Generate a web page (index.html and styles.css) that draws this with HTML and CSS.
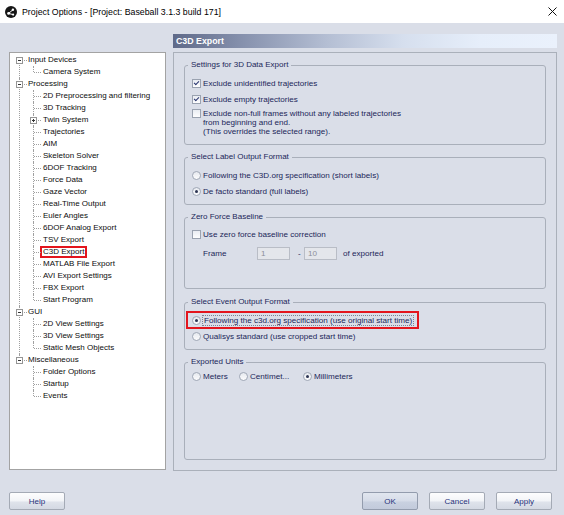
FILE: index.html
```html
<!DOCTYPE html>
<html lang="en">
<head>
<meta charset="utf-8">
<title>Project Options</title>
<link rel="stylesheet" href="styles.css">
</head>
<body>
<div class="window">
  <div class="titlebar">
    <svg class="app-icon" width="12" height="12" viewBox="0 0 12 12">
      <circle cx="6" cy="6" r="6" fill="#161616"/>
      <path d="M3.6 7.4 L7.8 3.9 M3.6 7.4 L8 8.6" stroke="#fff" stroke-width="1"/>
      <circle cx="3.6" cy="7.4" r="1.4" fill="#fff"/>
      <circle cx="7.9" cy="3.8" r="1.2" fill="#fff"/>
      <circle cx="8.1" cy="8.6" r="1.1" fill="#fff"/>
    </svg>
    <span class="title">Project Options - [Project: Baseball 3.1.3 build 171]</span>
    <svg class="close" width="9" height="9" viewBox="0 0 9 9">
      <path d="M0.5 0.5 L8.5 8.5 M8.5 0.5 L0.5 8.5" stroke="#111" stroke-width="1"/>
    </svg>
  </div>

  <div class="client">
    <div class="main">
      <div class="tree-pane">
        <ul class="tree">
          <li><span class="exp"></span><span class="label">Input Devices</span>
            <ul>
              <li><span class="label">Camera System</span></li>
            </ul>
          </li>
          <li><span class="exp"></span><span class="label">Processing</span>
            <ul>
              <li><span class="label">2D Preprocessing and filtering</span></li>
              <li><span class="label">3D Tracking</span></li>
              <li><span class="exp plus"></span><span class="label">Twin System</span></li>
              <li><span class="label">Trajectories</span></li>
              <li><span class="label">AIM</span></li>
              <li><span class="label">Skeleton Solver</span></li>
              <li><span class="label">6DOF Tracking</span></li>
              <li><span class="label">Force Data</span></li>
              <li><span class="label">Gaze Vector</span></li>
              <li><span class="label">Real-Time Output</span></li>
              <li><span class="label">Euler Angles</span></li>
              <li><span class="label">6DOF Analog Export</span></li>
              <li><span class="label">TSV Export</span></li>
              <li><span class="label"><span class="mark">C3D Export</span></span></li>
              <li><span class="label">MATLAB File Export</span></li>
              <li><span class="label">AVI Export Settings</span></li>
              <li><span class="label">FBX Export</span></li>
              <li><span class="label">Start Program</span></li>
            </ul>
          </li>
          <li><span class="exp"></span><span class="label">GUI</span>
            <ul>
              <li><span class="label">2D View Settings</span></li>
              <li><span class="label">3D View Settings</span></li>
              <li><span class="label">Static Mesh Objects</span></li>
            </ul>
          </li>
          <li><span class="exp"></span><span class="label">Miscellaneous</span>
            <ul>
              <li><span class="label">Folder Options</span></li>
              <li><span class="label">Startup</span></li>
              <li><span class="label">Events</span></li>
            </ul>
          </li>
        </ul>
      </div>

      <div class="page">
        <div class="page-header">C3D Export</div>
        <div class="page-body">
          <fieldset class="group g-data">
            <legend>Settings for 3D Data Export</legend>
            <div class="group-body">
              <div class="opt"><span class="cb on"></span><span>Exclude unidentified trajectories</span></div>
              <div class="opt"><span class="cb on"></span><span>Exclude empty trajectories</span></div>
              <div class="opt multi"><span class="cb"></span><span>Exclude non-full frames without any labeled trajectories<br>from beginning and end.<br>(This overrides the selected range).</span></div>
            </div>
          </fieldset>

          <fieldset class="group g-label">
            <legend>Select Label Output Format</legend>
            <div class="group-body">
              <div class="opt"><span class="rb"></span><span>Following the C3D.org specification (short labels)</span></div>
              <div class="opt"><span class="rb on"></span><span>De facto standard (full labels)</span></div>
            </div>
          </fieldset>

          <fieldset class="group g-force">
            <legend>Zero Force Baseline</legend>
            <div class="group-body">
              <div class="opt"><span class="cb"></span><span>Use zero force baseline correction</span></div>
              <div class="frame-row">
                <span class="frame-label">Frame</span>
                <span class="num">1</span>
                <span class="dash">-</span>
                <span class="num">10</span>
                <span class="of">of exported</span>
              </div>
            </div>
          </fieldset>

          <fieldset class="group g-event">
            <legend>Select Event Output Format</legend>
            <div class="group-body">
              <div class="opt"><span class="hilite"><span class="rb on"></span><span class="focus">Following the c3d.org specification (use original start time)</span></span></div>
              <div class="opt"><span class="rb"></span><span>Qualisys standard (use cropped start time)</span></div>
            </div>
          </fieldset>

          <fieldset class="group g-units">
            <legend>Exported Units</legend>
            <div class="group-body">
              <div class="units">
                <div class="opt u-m"><span class="rb"></span><span>Meters</span></div>
                <div class="opt u-c"><span class="rb"></span><span>Centimet...</span></div>
                <div class="opt"><span class="rb on"></span><span>Millimeters</span></div>
              </div>
            </div>
          </fieldset>
        </div>
      </div>
    </div>

    <div class="actions">
      <button class="btn">Help</button>
      <span class="spacer"></span>
      <button class="btn default">OK</button>
      <button class="btn">Cancel</button>
      <button class="btn">Apply</button>
    </div>
  </div>
</div>
</body>
</html>
```

FILE: styles.css
```css
html, body {
  margin: 0;
  padding: 0;
}

body {
  font-family: "Liberation Sans", Arial, sans-serif;
  font-size: 8.1px;
  color: #1b2659;
  background: #dadee8;
}

.window {
  width: 564px;
  height: 515px;
  display: flex;
  flex-direction: column;
  overflow: hidden;
}

/* ---- title bar ---- */
.titlebar {
  height: 23px;
  flex: none;
  background: #fff;
  display: flex;
  align-items: center;
}

.app-icon {
  margin-left: 5px;
  flex: none;
}

.title {
  margin-left: 5px;
  font-size: 8.8px;
  color: #000;
  white-space: nowrap;
}

.close {
  margin-left: auto;
  margin-right: 7px;
  flex: none;
}

/* ---- client area ---- */
.client {
  flex: 1;
  background: #dadee8;
}

.main {
  display: grid;
  grid-template-columns: 157px 384px;
  column-gap: 7px;
  padding: 11px 0 0 9px;
  align-items: start;
}

/* ---- navigation tree ---- */
.tree-pane {
  margin-top: 18px;
  height: 418px;
  box-sizing: border-box;
  border: 1px solid #a3a3a3;
  background: #fff;
  padding-top: 1px;
  font-size: 8px;
  color: #0d0d0d;
  overflow: hidden;
}

.tree,
.tree ul {
  list-style: none;
  margin: 0;
  padding: 0;
}

.tree li {
  position: relative;
}

.tree .label {
  display: block;
  height: 12px;
  line-height: 12px;
  white-space: nowrap;
}

/* root level: line at x=19, text at x=28 */
.tree > li {
  padding-left: 18px;
}

.tree > li::before {
  content: "";
  position: absolute;
  left: 9px;
  top: 0;
  bottom: 0;
  border-left: 1px dotted #a0a0a0;
}

.tree > li:first-child::before {
  top: 6px;
}

.tree > li:last-child::before {
  bottom: auto;
  height: 6px;
}

.tree > li::after {
  content: "";
  position: absolute;
  left: 10px;
  top: 6px;
  width: 7px;
  border-top: 1px dotted #a0a0a0;
}

/* child level: line at x=33, text at x=43 */
.tree ul li {
  padding-left: 15px;
}

.tree ul li::before {
  content: "";
  position: absolute;
  left: 5px;
  top: 0;
  bottom: 0;
  border-left: 1px dotted #a0a0a0;
}

.tree ul li:last-child::before {
  bottom: auto;
  height: 6px;
}

.tree ul li::after {
  content: "";
  position: absolute;
  left: 6px;
  top: 6px;
  width: 7px;
  border-top: 1px dotted #a0a0a0;
}

/* expand / collapse boxes */
.exp {
  position: absolute;
  z-index: 1;
  left: 6px;
  top: 3px;
  width: 7px;
  height: 7px;
  box-sizing: border-box;
  border: 1px solid #959595;
  background: #fff;
}

.exp::before {
  content: "";
  position: absolute;
  left: 1px;
  top: 2px;
  width: 3px;
  height: 1px;
  background: #333;
}

.exp.plus {
  left: 2px;
}

.exp.plus::after {
  content: "";
  position: absolute;
  left: 2px;
  top: 1px;
  width: 1px;
  height: 3px;
  background: #333;
}

.mark {
  display: inline-block;
  vertical-align: top;
  height: 12px;
  box-sizing: border-box;
  line-height: 8px;
  border: 2px solid #e3151d;
  padding: 0 1px;
  margin-left: -3px;
}

/* ---- page on the right ---- */
.page-header {
  height: 14px;
  line-height: 14px;
  padding-left: 3px;
  color: #fff;
  font-weight: bold;
  font-size: 8.8px;
  background: linear-gradient(to right, #5f6a89 0%, #8691ad 18%, #b4bed3 40%, #d6dfee 60%, #e6eefa 80%, #eaf1fc 100%);
}

.page-body {
  margin-top: 4px;
  height: 419px;
  box-sizing: border-box;
  border: 1px solid #aab0ba;
  padding: 7px 10px 0 10px;
  display: flex;
  flex-direction: column;
  gap: 7px;
}

.group {
  margin: 0;
  padding: 0 7px;
  min-width: 0;
  box-sizing: border-box;
  border: 1px solid #a9afba;
  border-radius: 3px;
}

.group legend {
  padding: 0 3px;
  margin-left: -4px;
  line-height: 10px;
  font-size: 8px;
  color: #1b2659;
}

.g-data { height: 85px; }
.g-label { height: 53px; }
.g-force { height: 77px; }
.g-event { height: 53px; margin-top: 1px; }
.g-units { height: 103px; }

.group-body {
  display: flex;
  flex-direction: column;
  gap: 2px;
  padding-top: 6px;
}

.g-force .group-body { padding-top: 5px; }
.g-units .group-body { padding-top: 2px; }

.opt {
  display: flex;
  align-items: center;
  gap: 2px;
  height: 14px;
  white-space: nowrap;
}

.opt.multi {
  align-items: flex-start;
  height: auto;
  line-height: 9px;
  margin-top: 1px;
}

/* check boxes */
.cb {
  flex: none;
  width: 9px;
  height: 9px;
  box-sizing: border-box;
  border: 1px solid #9aa2b0;
  background: linear-gradient(#e9ecf2, #fdfdfe);
  display: grid;
  place-items: center;
}

.cb.on::after {
  content: "";
  width: 2px;
  height: 4px;
  border: solid #2a3670;
  border-width: 0 1px 1px 0;
  transform: translate(0, -1px) rotate(45deg);
}

/* radio buttons */
.rb {
  flex: none;
  width: 9px;
  height: 9px;
  box-sizing: border-box;
  border: 1px solid #a0a8b6;
  border-radius: 50%;
  background: linear-gradient(#e6e9ef, #fcfcfd);
  display: grid;
  place-items: center;
}

.rb.on::after {
  content: "";
  width: 3px;
  height: 3px;
  border-radius: 50%;
  background: #2c3452;
}

.hilite {
  display: flex;
  align-items: center;
  gap: 1px;
  height: 18px;
  box-sizing: border-box;
  border: 2px solid #e3151d;
  margin: -2px 0 -2px -6px;
  padding: 0 3px 0 4px;
}

.focus {
  border: 1px dotted #7d8290;
  padding: 0 1px;
  line-height: 9px;
}

/* frame range */
.frame-row {
  display: flex;
  align-items: center;
  height: 13px;
  margin-top: 4px;
  padding-left: 11px;
  white-space: nowrap;
}

.frame-label {
  width: 54px;
}

.num {
  width: 33px;
  height: 13px;
  box-sizing: border-box;
  border: 1px solid #b9bdc6;
  background: #e4e6eb;
  color: #8b8f99;
  padding-left: 3px;
  line-height: 11px;
}

.dash {
  width: 14px;
  box-sizing: border-box;
  padding-left: 8px;
}

.of {
  margin-left: 6px;
}

/* units */
.units {
  display: flex;
}

.u-m { width: 47px; }
.u-c { width: 64px; }

/* ---- dialog buttons ---- */
.actions {
  display: flex;
  align-items: center;
  gap: 11px;
  margin-top: 21px;
  padding: 0 12px 0 9px;
}

.spacer {
  flex: 1;
}

.btn {
  width: 56px;
  height: 18px;
  margin: 0;
  padding: 0;
  box-sizing: border-box;
  border: 1px solid #a4aab5;
  border-radius: 2px;
  font-family: inherit;
  font-size: 8px;
  color: #26317a;
  background: linear-gradient(#fdfdfe 0%, #f2f4f7 50%, #dfe3eb 56%, #d4d9e3 100%);
}

.btn.default {
  border-color: #939cad;
  background: linear-gradient(#e1e6ef 0%, #d6dce8 50%, #c9d1e0 56%, #c2cadb 100%);
}
```
